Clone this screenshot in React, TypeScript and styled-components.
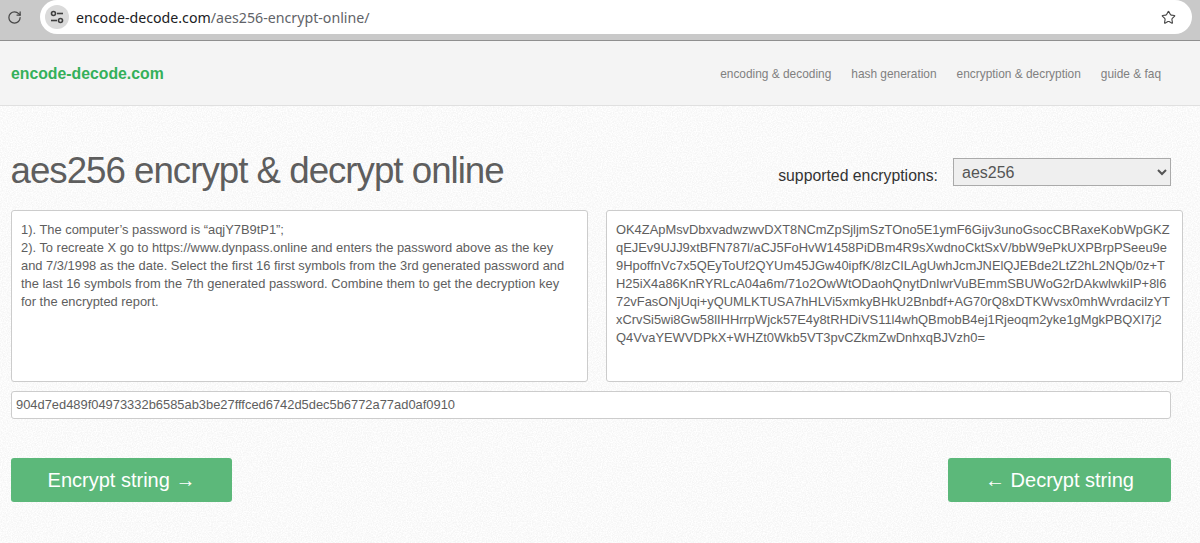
import { createGlobalStyle } from 'styled-components';
import styled from 'styled-components';
import { RotateCw, Star } from 'lucide-react';

const noise = `url("data:image/svg+xml,%3Csvg xmlns='http://www.w3.org/2000/svg' width='300' height='300'%3E%3Cfilter id='n'%3E%3CfeTurbulence type='fractalNoise' baseFrequency='0.8' numOctaves='2' stitchTiles='stitch'/%3E%3CfeColorMatrix values='0 0 0 0 1 0 0 0 0 1 0 0 0 0 1 2.4 0 0 0 -0.7'/%3E%3C/filter%3E%3Crect width='300' height='300' filter='url(%23n)'/%3E%3C/svg%3E")`;

const GlobalStyle = createGlobalStyle`
  html, body {
    margin: 0;
    padding: 0;
    height: 100%;
  }
  body {
    overflow: hidden;
    background-color: #f5f5f5;
    background-image: ${noise};
    font-family: "Liberation Sans", Arial, sans-serif;
    color: #555;
  }
`;

const BrowserBar = styled.div`
  height: 41px;
  box-sizing: border-box;
  background: #c9c9c9;
  border-bottom: 1px solid #8f8f8f;
  display: flex;
  align-items: flex-start;
  padding-right: 8px;
`;

const ReloadButton = styled.div`
  width: 40px;
  height: 34px;
  flex: none;
  display: flex;
  align-items: center;
  justify-content: center;
  padding-right: 12px;
  box-sizing: border-box;
  color: #474747;
`;

const AddressPill = styled.div`
  flex: 1;
  height: 34px;
  background: #fff;
  border-radius: 17px;
  display: flex;
  align-items: center;
  padding: 0 16px 0 5px;
`;

const SiteInfo = styled.div`
  width: 24px;
  height: 24px;
  flex: none;
  border-radius: 50%;
  background: #dadada;
  display: flex;
  align-items: center;
  justify-content: center;
  color: #3f3f3f;
`;

const Url = styled.div`
  flex: 1;
  margin-left: 7px;
  font-family: "Noto Sans", sans-serif;
  font-size: 14.2px;
  color: #5f6368;
`;

const UrlHost = styled.span`
  color: #202124;
`;

const NavBar = styled.nav`
  height: 65px;
  box-sizing: border-box;
  background: #f4f4f4;
  border-bottom: 1px solid #e0e0e0;
  display: flex;
  align-items: center;
  justify-content: space-between;
  padding: 2px 39px 0 11px;
`;

const Logo = styled.a`
  font-size: 15.8px;
  font-weight: 700;
  color: #34b05a;
`;

const NavLinks = styled.div`
  display: flex;
  gap: 20px;
`;

const NavLink = styled.a`
  font-size: 11.9px;
  color: #808080;
`;

const Main = styled.main`
  padding: 0 17px 0 11px;
`;

const Heading = styled.div`
  display: flex;
  align-items: center;
  justify-content: space-between;
  height: 104px;
  box-sizing: border-box;
  padding: 27px 12px 0 0;
`;

const Title = styled.h1`
  margin: 0 0 2px -0.5px;
  font-size: 36.7px;
  font-weight: 400;
  letter-spacing: -1px;
  color: #5e5e5e;
`;

const Encryptions = styled.div`
  display: flex;
  align-items: center;
  gap: 15px;
`;

const EncryptionLabel = styled.label`
  font-size: 15.8px;
  color: #333;
  padding-top: 9px;
`;

const EncryptionSelect = styled.select`
  width: 218px;
  height: 28px;
  box-sizing: border-box;
  font-family: inherit;
  font-size: 16px;
  color: #555;
  background: #efefef;
  border: 1px solid #aaa;
  border-radius: 0;
  padding: 2px 4px 0;
`;

const Panels = styled.div`
  display: grid;
  grid-template-columns: 577px 577px;
  gap: 18px;
`;

const TextBox = styled.textarea`
  display: block;
  height: 172px;
  box-sizing: border-box;
  resize: none;
  overflow: hidden;
  background: #fff;
  border: 1px solid #ccc;
  border-radius: 3px;
  padding: 10px 9px 8px;
  font-family: inherit;
  font-size: 12.9px;
  line-height: 18px;
  color: #5e5e5e;
  outline: none;
`;

const KeyInput = styled.input`
  display: block;
  width: 1160px;
  height: 28px;
  box-sizing: border-box;
  margin-top: 9px;
  background: #fff;
  border: 1px solid #ccc;
  border-radius: 3px;
  padding: 0 4px 2px;
  font-family: inherit;
  font-size: 12.9px;
  color: #5e5e5e;
  outline: none;
`;

const Actions = styled.div`
  width: 1160px;
  display: flex;
  justify-content: space-between;
  margin-top: 39px;
`;

const ActionButton = styled.button<{ $wide?: boolean }>`
  width: ${(p) => (p.$wide ? 223 : 221)}px;
  height: 44px;
  background: #5cb87a;
  border: 0;
  border-radius: 3px;
  color: #fff;
  font-family: inherit;
  font-size: 20px;
`;

const leftText = `1). The computer’s password is “aqjY7B9tP1”;
2). To recreate X go to https://www.dynpass.online and enters the password above as the key
and 7/3/1998 as the date. Select the first 16 first symbols from the 3rd generated password and
the last 16 symbols from the 7th generated password. Combine them to get the decryption key
for the encrypted report.`;

const rightText = `OK4ZApMsvDbxvadwzwvDXT8NCmZpSjljmSzTOno5E1ymF6Gijv3unoGsocCBRaxeKobWpGKZ
qEJEv9UJJ9xtBFN787l/aCJ5FoHvW1458PiDBm4R9sXwdnoCktSxV/bbW9ePkUXPBrpPSeeu9e
9HpoffnVc7x5QEyToUf2QYUm45JGw40ipfK/8lzCILAgUwhJcmJNElQJEBde2LtZ2hL2NQb/0z+T
H25iX4a86KnRYRLcA04a6m/71o2OwWtODaohQnytDnIwrVuBEmmSBUWoG2rDAkwlwkiIP+8l6
72vFasONjUqi+yQUMLKTUSA7hHLVi5xmkyBHkU2Bnbdf+AG70rQ8xDTKWvsx0mhWvrdacilzYT
xCrvSi5wi8Gw58lIHHrrpWjck57E4y8tRHDiVS11l4whQBmobB4ej1Rjeoqm2yke1gMgkPBQXI7j2
Q4VvaYEWVDPkX+WHZt0Wkb5VT3pvCZkmZwDnhxqBJVzh0=`;

const TuneIcon = () => (
  <svg width="16" height="16" viewBox="0 0 16 16" fill="none" stroke="currentColor" strokeWidth="1.6">
    <circle cx="4.5" cy="4.5" r="2" />
    <path d="M8 4.5h6" />
    <circle cx="11.5" cy="11.5" r="2" />
    <path d="M2 11.5h6" />
  </svg>
);

export default function App() {
  return (
    <>
      <GlobalStyle />
      <BrowserBar>
        <ReloadButton>
          <RotateCw size={15} strokeWidth={2} />
        </ReloadButton>
        <AddressPill>
          <SiteInfo>
            <TuneIcon />
          </SiteInfo>
          <Url>
            <UrlHost>encode-decode.com</UrlHost>/aes256-encrypt-online/
          </Url>
          <Star size={15} strokeWidth={1.8} color="#474747" />
        </AddressPill>
      </BrowserBar>
      <NavBar>
        <Logo>encode-decode.com</Logo>
        <NavLinks>
          <NavLink>encoding &amp; decoding</NavLink>
          <NavLink>hash generation</NavLink>
          <NavLink>encryption &amp; decryption</NavLink>
          <NavLink>guide &amp; faq</NavLink>
        </NavLinks>
      </NavBar>
      <Main>
        <Heading>
          <Title>aes256 encrypt &amp; decrypt online</Title>
          <Encryptions>
            <EncryptionLabel>supported encryptions:</EncryptionLabel>
            <EncryptionSelect defaultValue="aes256">
              <option>aes256</option>
            </EncryptionSelect>
          </Encryptions>
        </Heading>
        <Panels>
          <TextBox readOnly value={leftText} wrap="off" />
          <TextBox readOnly value={rightText} wrap="off" />
        </Panels>
        <KeyInput readOnly value="904d7ed489f04973332b6585ab3be27fffced6742d5dec5b6772a77ad0af0910" />
        <Actions>
          <ActionButton>Encrypt string →</ActionButton>
          <ActionButton $wide>← Decrypt string</ActionButton>
        </Actions>
      </Main>
    </>
  );
}
